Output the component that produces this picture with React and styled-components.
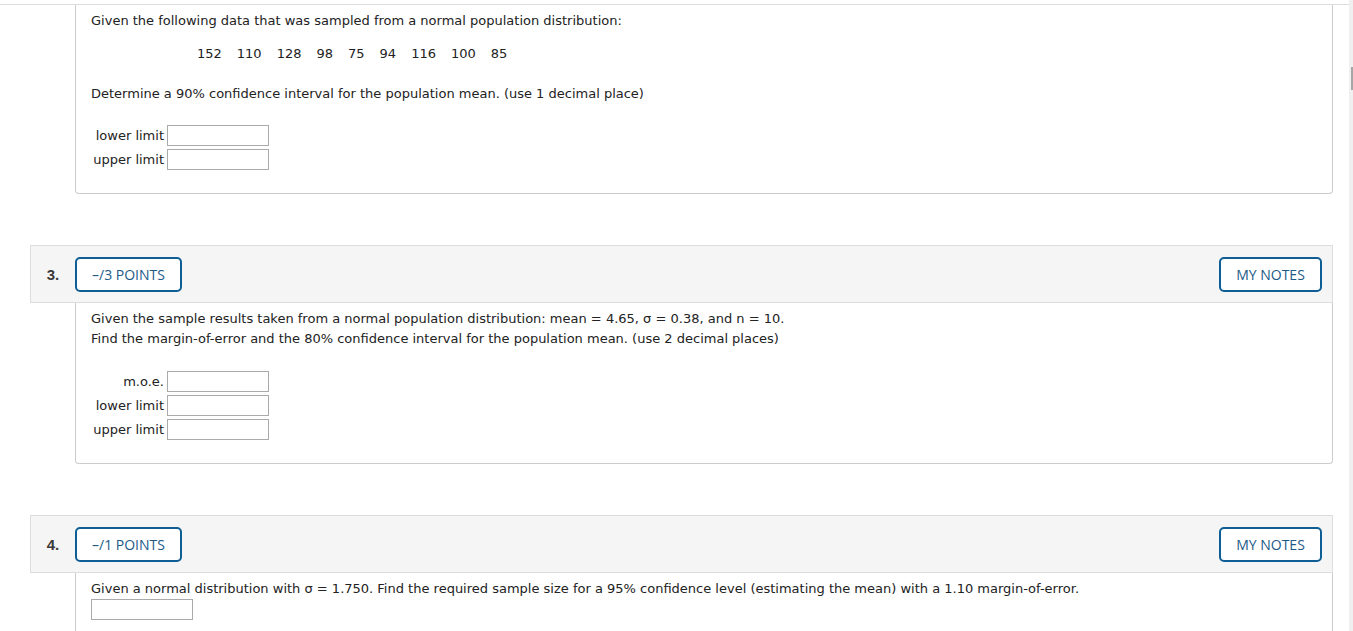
import React from 'react';
import styled, { createGlobalStyle } from 'styled-components';

const GlobalStyle = createGlobalStyle`
  html, body {
    margin: 0;
    padding: 0;
    background: #fff;
    overflow: hidden;
  }
  body {
    font-family: "DejaVu Sans", Verdana, sans-serif;
    font-size: 13px;
    color: #222;
  }
`;

const Page = styled.div`
  display: flex;
  width: 1353px;
  height: 631px;
  overflow: hidden;
`;

const Main = styled.div`
  flex: 1;
  display: flex;
  flex-direction: column;
`;

const TopBar = styled.div`
  height: 4px;
  border-bottom: 1px solid #ddd;
  flex-shrink: 0;
`;

const Content = styled.div`
  padding: 0 16px 0 30px;
  display: flex;
  flex-direction: column;
`;

const Track = styled.div`
  width: 4px;
  height: 631px;
  background: #f0f0f0;
  display: flex;
  justify-content: flex-end;
`;

const Thumb = styled.div`
  width: 2px;
  height: 23px;
  margin-top: 67px;
  background: #a6a6a6;
`;

const Question = styled.section`
  display: flex;
  flex-direction: column;
  margin-bottom: 51px;
`;

const Header = styled.div`
  box-sizing: border-box;
  height: 58px;
  display: flex;
  align-items: center;
  background: #f5f5f5;
  border: 1px solid #ddd;
  padding-right: 10px;
`;

const Number = styled.div`
  width: 44px;
  text-align: center;
  font-family: "Liberation Sans", Arial, sans-serif;
  font-weight: bold;
  font-size: 15px;
  color: #3a3a3a;
`;

const Pill = styled.button`
  box-sizing: border-box;
  height: 35px;
  width: ${(p) => p.$width}px;
  margin-left: ${(p) => (p.$right ? 'auto' : '0')};
  border: 2px solid #0e5e95;
  border-radius: 5px;
  background: #fff;
  color: #1d5a88;
  font-family: "Open Sans", "Noto Sans", sans-serif;
  font-size: 14px;
  font-weight: 500;
  padding: 0;
  text-align: center;
`;

const Body = styled.div`
  box-sizing: border-box;
  margin-left: 45px;
  border: 1px solid #ccc;
  border-top: none;
  border-radius: ${(p) => (p.$open ? '0' : '0 0 4px 4px')};
  padding: 6px 15px 23px;
  line-height: 20px;
`;

const Line = styled.p`
  margin: ${(p) => p.$top || 0}px 0 0;
`;

const DataRow = styled.div`
  display: flex;
  gap: 15px;
  margin: 13px 0 0 106px;
`;

const Answers = styled.div`
  display: grid;
  grid-template-columns: 73px 102px;
  column-gap: 3px;
  row-gap: 3px;
  margin-top: ${(p) => p.$top}px;
  align-items: center;
`;

const Label = styled.label`
  text-align: right;
  line-height: 21px;
`;

const Box = styled.input`
  box-sizing: border-box;
  width: 102px;
  height: 21px;
  border: 1px solid #aaa;
  margin: 0;
  padding: 0 2px;
  font: inherit;
`;

const data = [152, 110, 128, 98, 75, 94, 116, 100, 85];

const Fields = ({ labels, top = 22 }) => (
  <Answers $top={top}>
    {labels.map((l) => (
      <React.Fragment key={l}>
        <Label>{l}</Label>
        <Box type="text" />
      </React.Fragment>
    ))}
  </Answers>
);

const QHeader = ({ num, points }) => (
  <Header>
    <Number>{num}.</Number>
    <Pill $width={107}>–/{points} POINTS</Pill>
    <Pill $width={103} $right>MY NOTES</Pill>
  </Header>
);

export default function App() {
  return (
    <>
      <GlobalStyle />
      <Page>
        <Main>
          <TopBar />
          <Content>
            <Question>
              <Body>
                <Line>Given the following data that was sampled from a normal population distribution:</Line>
                <DataRow>
                  {data.map((d, i) => (
                    <span key={i}>{d}</span>
                  ))}
                </DataRow>
                <Line $top={20}>Determine a 90% confidence interval for the population mean. (use 1 decimal place)</Line>
                <Fields labels={['lower limit', 'upper limit']} top={21} />
              </Body>
            </Question>

            <Question>
              <QHeader num={3} points={3} />
              <Body>
                <Line>
                  Given the sample results taken from a normal population distribution: mean = 4.65, σ = 0.38, and n = 10.
                </Line>
                <Line>
                  Find the margin-of-error and the 80% confidence interval for the population mean. (use 2 decimal places)
                </Line>
                <Fields labels={['m.o.e.', 'lower limit', 'upper limit']} />
              </Body>
            </Question>

            <Question>
              <QHeader num={4} points={1} />
              <Body $open>
                <Line>
                  Given a normal distribution with σ = 1.750. Find the required sample size for a 95% confidence level
                  (estimating the mean) with a 1.10 margin-of-error.
                </Line>
                <Box type="text" />
              </Body>
            </Question>
          </Content>
        </Main>
        <Track>
          <Thumb />
        </Track>
      </Page>
    </>
  );
}
